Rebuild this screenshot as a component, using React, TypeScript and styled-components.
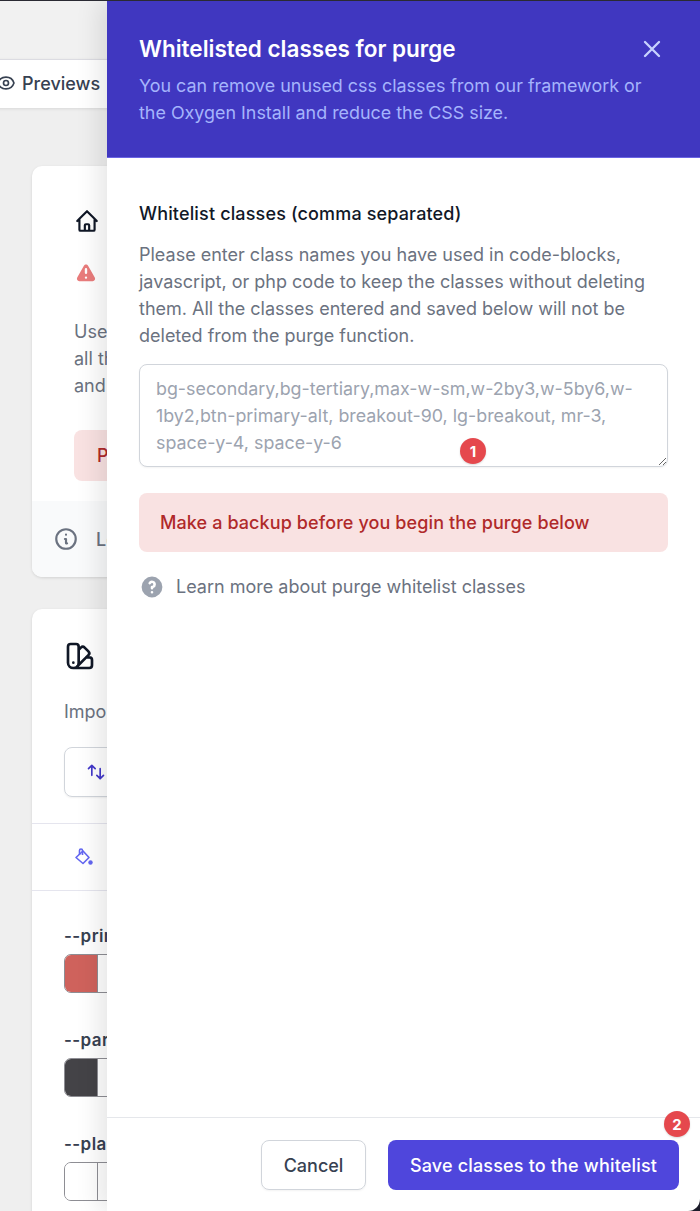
import React from 'react';
import styled, { createGlobalStyle } from 'styled-components';
import {
  HiOutlineHome,
  HiExclamation,
  HiOutlineInformationCircle,
  HiQuestionMarkCircle,
  HiOutlineColorSwatch,
  HiOutlineSwitchVertical,
  HiOutlineEye,
  HiOutlineX,
} from 'react-icons/hi';

const App: React.FC = () => {
  return (
    <Screen>
      <GlobalStyle />
      <Backdrop>
        <Inner>
          <TopStrip />
          <TabBar>
            <HiOutlineEye size={20} />
            <span>Previews</span>
          </TabBar>
          <Card>
            <CardBody>
              <HomeIcon><HiOutlineHome size={26} /></HomeIcon>
              <WarnIcon><HiExclamation size={24} /></WarnIcon>
              <CardText>
                Use the purge to clean<br />
                all the unused classes<br />
                and reduce the size.
              </CardText>
              <PurgeButton>Purge</PurgeButton>
            </CardBody>
            <CardFooter>
              <HiOutlineInformationCircle size={26} />
              <span>Learn more</span>
            </CardFooter>
          </Card>
          <Card>
            <PaletteHead>
              <HiOutlineColorSwatch size={32} />
              <Muted>Import or export</Muted>
              <GhostButton><HiOutlineSwitchVertical size={20} /></GhostButton>
            </PaletteHead>
            <TabRow>
              <svg width="20" height="20" viewBox="0 0 20 20" fill="none" stroke="#6366f1" strokeWidth="1.6">
                <path d="M2 10.5 9 4l6 6.5-6 6z" strokeLinejoin="round" />
                <path d="M5.5 8V3.5a1.5 1.5 0 0 1 3 0V8" />
                <circle cx="16.5" cy="15.5" r="2.2" fill="#6366f1" stroke="none" />
              </svg>
            </TabRow>
            <Vars>
              <VarBlock>
                <VarName>--primary</VarName>
                <Swatch><SwatchCell $color="#cf625c" /><SwatchCell /></Swatch>
              </VarBlock>
              <VarBlock>
                <VarName>--paragraph</VarName>
                <Swatch><SwatchCell $color="#444347" /><SwatchCell /></Swatch>
              </VarBlock>
              <VarBlock>
                <VarName>--placeholder</VarName>
                <Swatch><SwatchCell /><SwatchCell /></Swatch>
              </VarBlock>
            </Vars>
          </Card>
        </Inner>
      </Backdrop>
      <Panel>
        <Header>
          <HeaderTop>
            <Title>Whitelisted classes for purge</Title>
            <CloseButton><HiOutlineX size={28} /></CloseButton>
          </HeaderTop>
          <Subtitle>
            You can remove unused css classes from our framework or the Oxygen Install and reduce the CSS size.
          </Subtitle>
        </Header>
        <Body>
          <Label>Whitelist classes (comma separated)</Label>
          <Help>
            Please enter class names you have used in code-blocks, javascript, or php code to keep the classes without deleting them. All the classes entered and saved below will not be deleted from the purge function.
          </Help>
          <FieldWrap>
            <Field
              readOnly
              placeholder="bg-secondary,bg-tertiary,max-w-sm,w-2by3,w-5by6,w-1by2,btn-primary-alt, breakout-90, lg-breakout, mr-3, space-y-4, space-y-6"
            />
            <FieldBadge>1</FieldBadge>
          </FieldWrap>
          <Alert>Make a backup before you begin the purge below</Alert>
          <LearnRow>
            <QuestionIcon><HiQuestionMarkCircle size={26} /></QuestionIcon>
            <span>Learn more about purge whitelist classes</span>
          </LearnRow>
        </Body>
        <Footer>
          <CancelButton>Cancel</CancelButton>
          <SaveWrap>
            <SaveButton>Save classes to the whitelist</SaveButton>
            <SaveBadge>2</SaveBadge>
          </SaveWrap>
        </Footer>
      </Panel>
    </Screen>
  );
};

export default App;

const GlobalStyle = createGlobalStyle`
  html, body {
    margin: 0;
    padding: 0;
    background: #efefef;
  }
  * {
    box-sizing: border-box;
  }
  body {
    font-family: Inter, "Liberation Sans", sans-serif;
  }
`;

const Screen = styled.div`
  display: flex;
  width: 700px;
  height: 1211px;
  overflow: hidden;
  border-top: 1px solid #2a2a33;
  background: #1d1d2b;
`;

const Backdrop = styled.div`
  width: 107px;
  flex: none;
  overflow: hidden;
  background: #efefef;
`;

const Inner = styled.div`
  width: 480px;
  display: flex;
  flex-direction: column;
`;

const TopStrip = styled.div`
  height: 58px;
  background: #f1f1f1;
`;

const TabBar = styled.div`
  height: 49px;
  margin-left: -4px;
  margin-bottom: 58px;
  padding-bottom: 2px;
  display: flex;
  align-items: center;
  gap: 6px;
  background: #fff;
  border-top: 1px solid #dcdce2;
  box-shadow: 0 1px 3px rgba(0, 0, 0, 0.1);
  color: #374151;
  font-size: 18px;
  font-weight: 500;
`;

const Card = styled.div`
  margin-left: 32px;
  margin-bottom: 32px;
  background: #fff;
  border-radius: 10px;
  box-shadow: 0 1px 3px rgba(0, 0, 0, 0.12);
  overflow: hidden;
`;

const CardBody = styled.div`
  height: 335px;
  padding: 42px 0 0 42px;
  display: flex;
  flex-direction: column;
  align-items: flex-start;
`;

const HomeIcon = styled.div`
  height: 26px;
  color: #111827;
`;

const WarnIcon = styled.div`
  height: 24px;
  margin-top: 28px;
  color: #e97c7c;
`;

const CardText = styled.p`
  margin: 32px 0 0;
  font-size: 18px;
  line-height: 27px;
  color: #6b7280;
  white-space: nowrap;
`;

const PurgeButton = styled.div`
  margin-top: 31px;
  width: 200px;
  height: 51px;
  padding-left: 23px;
  display: flex;
  align-items: center;
  border-radius: 8px;
  background: #f9e2e2;
  color: #b02a2a;
  font-size: 18px;
  font-weight: 500;
`;

const CardFooter = styled.div`
  height: 76px;
  padding-left: 21px;
  display: flex;
  align-items: center;
  gap: 17px;
  background: #f9fafb;
  color: #6b7280;
  font-size: 18px;
  font-weight: 500;
  white-space: nowrap;
`;

const PaletteHead = styled.div`
  height: 215px;
  padding: 31px 0 0 32px;
  display: flex;
  flex-direction: column;
  align-items: flex-start;
  border-bottom: 1px solid #e5e5ee;
  color: #111827;
`;

const Muted = styled.div`
  margin-top: 26px;
  font-size: 18px;
  line-height: 27px;
  color: #6b7280;
  white-space: nowrap;
`;

const GhostButton = styled.div`
  margin-top: 22px;
  width: 200px;
  height: 50px;
  padding-left: 21px;
  display: flex;
  align-items: center;
  border: 1px solid #d1d5db;
  border-radius: 8px;
  box-shadow: 0 1px 2px rgba(0, 0, 0, 0.06);
  color: #4338ca;
`;

const TabRow = styled.div`
  height: 67px;
  padding-left: 42px;
  display: flex;
  align-items: center;
  border-bottom: 1px solid #e5e5ee;
`;

const Vars = styled.div`
  padding: 34px 0 60px 32px;
  display: flex;
  flex-direction: column;
  gap: 36px;
`;

const VarBlock = styled.div`
  display: flex;
  flex-direction: column;
  gap: 7px;
`;

const VarName = styled.div`
  font-size: 17px;
  line-height: 22px;
  font-weight: 600;
  letter-spacing: 0.4px;
  color: #374151;
  white-space: nowrap;
`;

const Swatch = styled.div`
  display: flex;
  width: 200px;
  height: 39px;
  overflow: hidden;
  border: 1.5px solid #8e8e94;
  border-radius: 7px;
`;

const SwatchCell = styled.div<{ $color?: string }>`
  width: 33px;
  border-right: 1.5px solid #8e8e94;
  background: ${(p) => p.$color || '#fff'};
`;

const Panel = styled.div`
  flex: 1;
  position: relative;
  display: flex;
  flex-direction: column;
  background: #fff;
  border-bottom-right-radius: 12px;
  box-shadow: -8px 0 24px rgba(0, 0, 0, 0.1);
`;

const Header = styled.header`
  height: 157px;
  padding: 32px 32px 0;
  background: #4037c0;
  border-bottom: 1px solid #6a64e4;
`;

const HeaderTop = styled.div`
  display: flex;
  align-items: center;
  justify-content: space-between;
  height: 32px;
`;

const Title = styled.h2`
  margin: 0;
  font-size: 22.5px;
  line-height: 32px;
  font-weight: 600;
  color: #fff;
`;

const CloseButton = styled.div`
  display: flex;
  margin-right: 2px;
  color: #c7d2fe;
`;

const Subtitle = styled.p`
  margin: 7px 0 0;
  max-width: 515px;
  font-size: 17.9px;
  line-height: 27px;
  color: #a5b4fc;
`;

const Body = styled.div`
  flex: 1;
  padding: 43px 32px 0;
  display: flex;
  flex-direction: column;
`;

const Label = styled.div`
  font-size: 18px;
  letter-spacing: 0.15px;
  line-height: 26px;
  font-weight: 500;
  color: #111827;
`;

const Help = styled.p`
  margin: 14px 0 0;
  font-size: 18px;
  line-height: 27px;
  color: #6b7280;
`;

const FieldWrap = styled.div`
  position: relative;
  margin-top: 15px;
  height: 103px;
`;

const Field = styled.textarea`
  display: block;
  width: 100%;
  height: 100%;
  padding: 10px 16px;
  border: 1px solid #d1d5db;
  border-radius: 8px;
  outline: none;
  background: #fff;
  font-family: inherit;
  font-size: 17.85px;
  line-height: 27px;
  box-shadow: 0 1px 2px rgba(0, 0, 0, 0.05);
  &::placeholder {
    color: #9ca3af;
    opacity: 1;
  }
`;

const Badge = styled.div`
  position: absolute;
  width: 26px;
  height: 26px;
  display: flex;
  align-items: center;
  justify-content: center;
  border-radius: 50%;
  background: #e5484d;
  color: #fff;
  font-size: 15px;
  font-weight: 700;
  box-shadow: 0 1px 2px rgba(0, 0, 0, 0.15);
`;

const FieldBadge = styled(Badge)`
  left: 321px;
  top: 74px;
`;

const Alert = styled.div`
  margin-top: 26px;
  height: 59px;
  padding-left: 21px;
  display: flex;
  align-items: center;
  border-radius: 8px;
  background: #f9e2e2;
  color: #b02a2a;
  font-size: 18px;
  letter-spacing: 0.1px;
  font-weight: 500;
`;

const LearnRow = styled.div`
  margin-top: 22px;
  display: flex;
  align-items: center;
  gap: 11px;
  color: #6b7280;
  font-size: 18px;
  line-height: 26px;
`;

const QuestionIcon = styled.div`
  display: flex;
  color: #9ca3af;
`;

const Footer = styled.footer`
  height: 94px;
  padding: 22px 21px 0 0;
  display: flex;
  justify-content: flex-end;
  align-items: flex-start;
  gap: 22px;
  border-top: 1px solid #e5e7eb;
`;

const CancelButton = styled.div`
  width: 105px;
  height: 50px;
  display: flex;
  align-items: center;
  justify-content: center;
  border: 1px solid #d1d5db;
  border-radius: 8px;
  box-shadow: 0 1px 2px rgba(0, 0, 0, 0.05);
  color: #374151;
  font-size: 18px;
  font-weight: 500;
`;

const SaveWrap = styled.div`
  position: relative;
`;

const SaveButton = styled.div`
  width: 291px;
  height: 50px;
  display: flex;
  align-items: center;
  justify-content: center;
  border-radius: 8px;
  background: #4f46dc;
  color: #fff;
  font-size: 18px;
  letter-spacing: 0.17px;
  font-weight: 500;
`;

const SaveBadge = styled(Badge)`
  right: -11px;
  top: -29px;
`;
